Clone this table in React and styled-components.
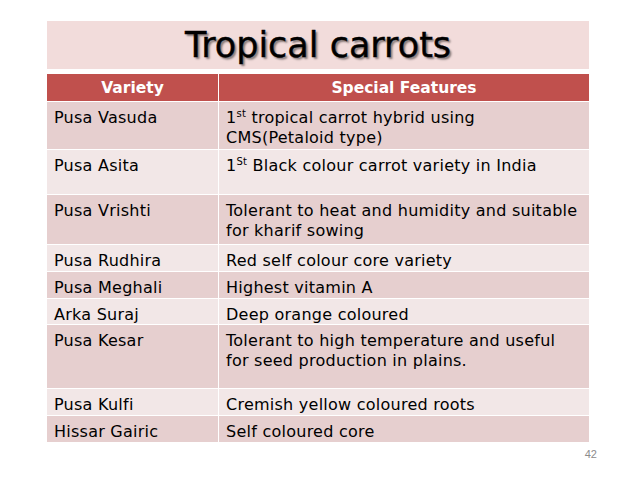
import React from 'react';
import styled, { createGlobalStyle } from 'styled-components';

const GlobalStyle = createGlobalStyle`
    html, body {
        margin: 0;
        padding: 0;
        background: #fff;
    }
    body {
        font-family: 'DejaVu Sans', 'Liberation Sans', sans-serif;
    }
`;

const rows = [
    { name: 'Pusa Vasuda', h: 48, dark: true, text: [<><Sup base="1">st</Sup> tropical carrot hybrid using</>, 'CMS(Petaloid type)'] },
    { name: 'Pusa Asita', h: 45, dark: false, text: [<><Sup base="1">St</Sup> Black colour carrot variety in India</>] },
    { name: 'Pusa Vrishti', h: 50, dark: true, text: ['Tolerant to heat and humidity and suitable', 'for kharif sowing'] },
    { name: 'Pusa Rudhira', h: 27, dark: false, text: ['Red self colour core variety'] },
    { name: 'Pusa Meghali', h: 27, dark: true, text: ['Highest vitamin A'] },
    { name: 'Arka Suraj', h: 26, dark: false, text: ['Deep orange coloured'] },
    { name: 'Pusa Kesar', h: 64, dark: true, text: ['Tolerant to high temperature and useful', 'for seed production in plains.'] },
    { name: 'Pusa Kulfi', h: 27, dark: false, text: ['Cremish yellow coloured roots'] },
    { name: 'Hissar Gairic', h: 27, dark: true, text: ['Self coloured core'] },
];

function Sup({ base, children }) {
    return (
        <>
            {base}
            <SupText>{children}</SupText>
        </>
    );
}

export default function App() {
    return (
        <Page>
            <GlobalStyle />
            <Slide>
                <TitleBox>
                    <Title>Tropical carrots</Title>
                </TitleBox>
                <Table>
                    <HeaderRow>
                        <HeadCell>Variety</HeadCell>
                        <HeadCell>Special Features</HeadCell>
                    </HeaderRow>
                    {rows.map((r) => (
                        <Row key={r.name} $h={r.h} $dark={r.dark}>
                            <Cell>{r.name}</Cell>
                            <Cell>
                                {r.text.map((line, i) => (
                                    <Line key={i}>{line}</Line>
                                ))}
                            </Cell>
                        </Row>
                    ))}
                </Table>
            </Slide>
            <PageNum>42</PageNum>
        </Page>
    );
}

const Page = styled.div`
    width: 638px;
    height: 478px;
    position: relative;
    background: #fff;
    overflow: hidden;
`;

const Slide = styled.div`
    width: 542px;
    padding: 21px 0 0 47px;
    display: flex;
    flex-direction: column;
    gap: 5px;
`;

const TitleBox = styled.div`
    height: 48px;
    background: #f2dcdb;
    display: flex;
    align-items: center;
    justify-content: center;
`;

const Title = styled.div`
    font-family: 'DejaVu Sans', sans-serif;
    font-size: 35px;
    color: #000;
    text-shadow: 2px 2px 2px rgba(0, 0, 0, 0.45);
    margin-top: 0;
    -webkit-text-stroke: 0.4px #000;
`;

const Table = styled.div`
    display: flex;
    flex-direction: column;
    gap: 1px;
`;

const HeaderRow = styled.div`
    display: grid;
    grid-template-columns: 171px 1fr;
    gap: 1px;
    height: 27px;
`;

const HeadCell = styled.div`
    background: #c0504d;
    color: #fff;
    font-weight: bold;
    font-size: 15.5px;
    display: flex;
    align-items: center;
    justify-content: center;
`;

const Row = styled.div`
    display: grid;
    grid-template-columns: 171px 1fr;
    gap: 1px;
    height: ${(p) => p.$h - 1}px;
    & > div {
        background: ${(p) => (p.$dark ? '#e6cfcf' : '#f2e7e7')};
    }
`;

const Cell = styled.div`
    padding: 6px 0 0 7px;
    font-size: 16px;
    line-height: 20px;
    letter-spacing: 0.25px;
    color: #000;
    white-space: nowrap;
    overflow: hidden;
`;

const Line = styled.div``;

const SupText = styled.sup`
    font-size: 10px;
    vertical-align: 6px;
    line-height: 0;
`;

const PageNum = styled.div`
    position: absolute;
    right: 41px;
    top: 448px;
    font-family: 'Liberation Sans', sans-serif;
    font-size: 11px;
    color: #8c8c8c;
`;
